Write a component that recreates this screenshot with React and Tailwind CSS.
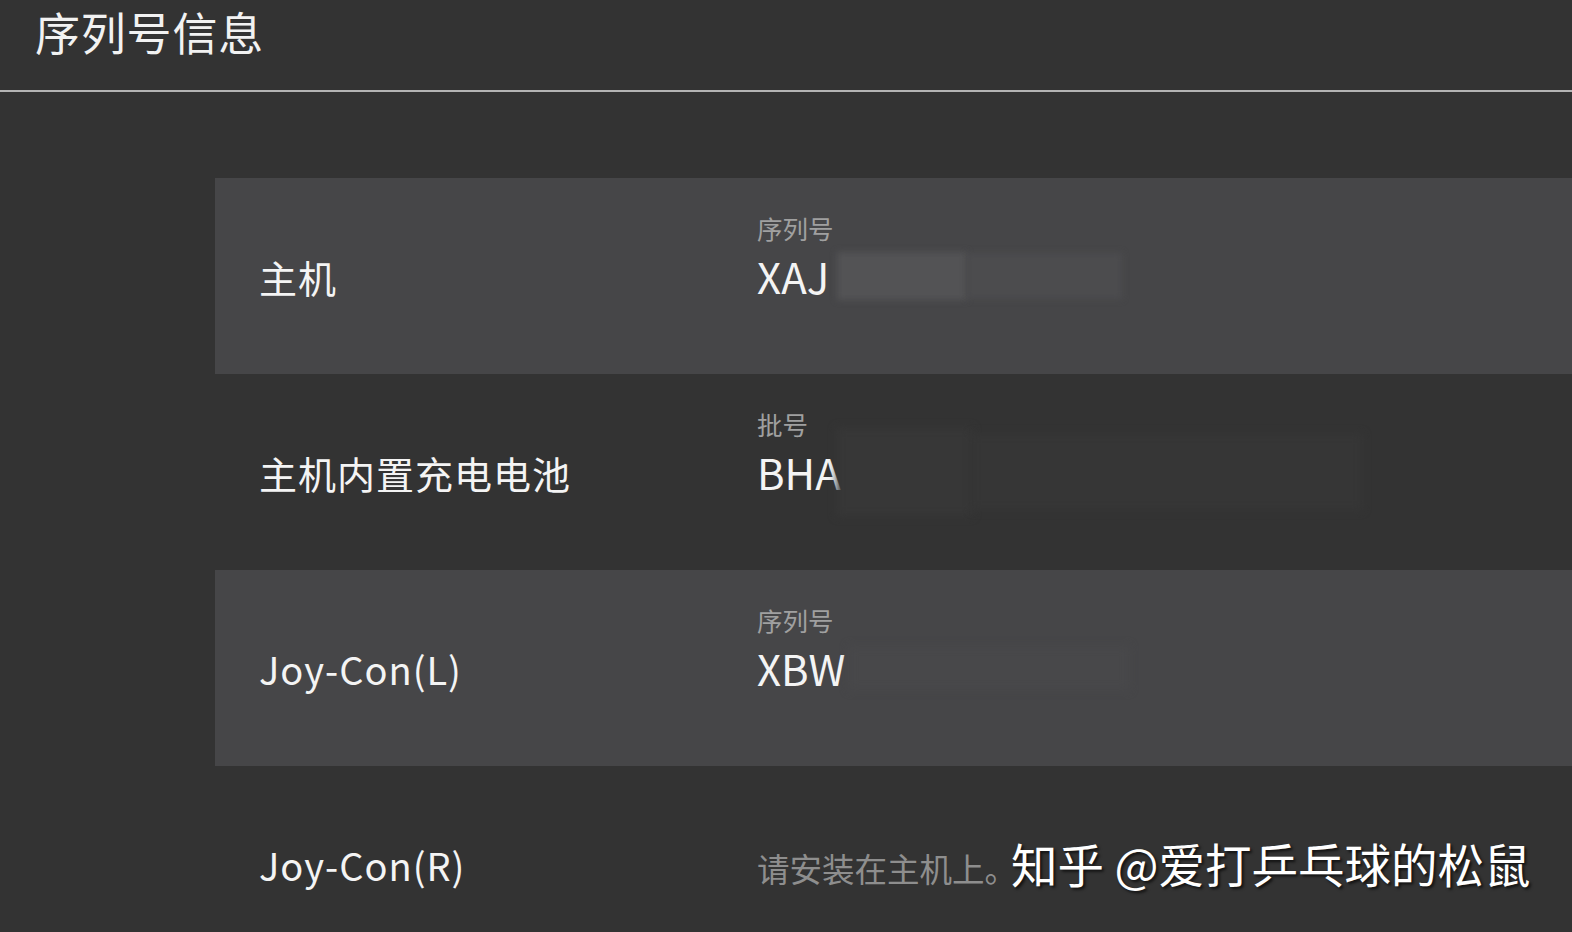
import React from 'react';

const rows = [
  { label: '主机', caption: '序列号', value: 'XAJ', shade: true, blur: 'light' },
  { label: '主机内置充电电池', caption: '批号', value: 'BHA', shade: false, blur: 'dark' },
  { label: 'Joy-Con(L)', caption: '序列号', value: 'XBW', shade: true, blur: 'faint' },
  { label: 'Joy-Con(R)', note: '请安装在主机上。', shade: false },
];

const Blur = ({ kind }) => {
  if (kind === 'light') {
    return (
      <div className="flex items-center ml-[8px] h-[48px]">
        <div className="w-[130px] h-[48px] bg-[#535355] blur-[3px]" />
        <div className="w-[155px] h-[46px] bg-[#4c4c4e] blur-[3px]" />
      </div>
    );
  }
  if (kind === 'dark') {
    return (
      <div className="flex items-center ml-[-4px] h-[90px]">
        <div className="w-[135px] h-[88px] bg-[#373737] blur-[4px]" />
        <div className="w-[390px] h-[76px] bg-[#363636] blur-[4px]" />
      </div>
    );
  }
  return <div className="ml-[4px] w-[280px] h-[44px] bg-[#48484a] blur-[4px]" />;
};

export default function App() {
  return (
    <div
      className="w-[1572px] h-[932px] overflow-hidden bg-[#333333] relative"
      style={{ fontFamily: '"Noto Sans CJK SC", "Noto Sans", sans-serif' }}
    >
      <header className="h-[92px] border-b-2 border-[#b4b4b4] pl-[35px] pt-[2px]">
        <h1 className="text-[45px] leading-[60px] text-[#f2f2f2] tracking-[0.8px]">序列号信息</h1>
      </header>

      <div className="pt-[86px] pl-[215px]">
        {rows.map((row, i) => (
          <div
            key={i}
            className={`flex items-center h-[196px] ${row.shade ? 'bg-[#464648]' : ''}`}
          >
            <div className="w-[542px] pl-[44px] text-[38px] text-[#f4f4f4] tracking-[1px]">
              {row.label}
            </div>
            {row.note ? (
              <div className="text-[32.5px] text-[#8e8e8e] mt-[8px]">{row.note}</div>
            ) : (
              <div className="flex flex-col gap-[8px] -mt-[38px]">
                <div className="text-[25.5px] leading-[30px] text-[#a0a0a0]">{row.caption}</div>
                <div className="flex items-center h-[50px]">
                  <span className="text-[42px] leading-[50px] text-[#f4f4f4]">{row.value}</span>
                  <Blur kind={row.blur} />
                </div>
              </div>
            )}
          </div>
        ))}
      </div>

      <div
        className="absolute left-[1011px] top-[833px] text-[46.5px] leading-[60px] text-white whitespace-nowrap"
        style={{ textShadow: '2px 2px 3px rgba(0,0,0,0.7)' }}
      >
        知乎 @爱打乒乓球的松鼠
      </div>
    </div>
  );
}
